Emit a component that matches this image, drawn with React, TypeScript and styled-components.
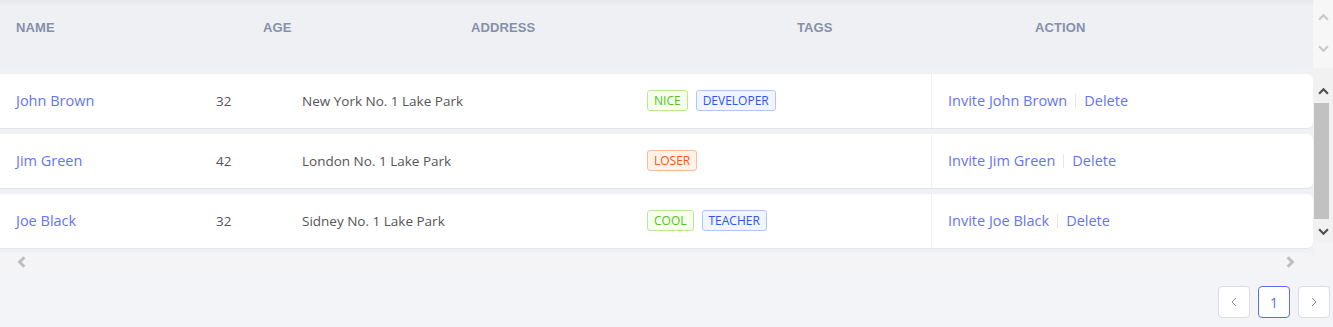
import React from 'react';
import styled, { createGlobalStyle } from 'styled-components';

type TagColor = 'green' | 'geekblue' | 'volcano';

interface Row {
  key: string;
  name: string;
  age: number;
  address: string;
  tags: { label: string; color: TagColor }[];
}

const rows: Row[] = [
  {
    key: '1',
    name: 'John Brown',
    age: 32,
    address: 'New York No. 1 Lake Park',
    tags: [
      { label: 'nice', color: 'green' },
      { label: 'developer', color: 'geekblue' },
    ],
  },
  {
    key: '2',
    name: 'Jim Green',
    age: 42,
    address: 'London No. 1 Lake Park',
    tags: [{ label: 'loser', color: 'volcano' }],
  },
  {
    key: '3',
    name: 'Joe Black',
    age: 32,
    address: 'Sidney No. 1 Lake Park',
    tags: [
      { label: 'cool', color: 'green' },
      { label: 'teacher', color: 'geekblue' },
    ],
  },
];

const tagPalette: Record<TagColor, { fg: string; bg: string; border: string }> = {
  green: { fg: '#52c41a', bg: '#f6ffed', border: '#b7eb8f' },
  geekblue: { fg: '#2f54eb', bg: '#f0f5ff', border: '#adc6ff' },
  volcano: { fg: '#fa541c', bg: '#fff2e8', border: '#ffbb96' },
};

const GlobalStyle = createGlobalStyle`
  html, body {
    margin: 0;
    padding: 0;
    background: #f3f4f7;
    font-family: "Open Sans", "Liberation Sans", sans-serif;
  }
  * { box-sizing: border-box; }
`;

const Page = styled.div`
  width: 1333px;
  height: 327px;
  display: flex;
  flex-direction: column;
  background: #f3f4f7;
  overflow: hidden;
`;

const HeaderWrap = styled.div`
  display: flex;
  height: 68px;
`;

const HeaderRow = styled.div`
  flex: 1;
  display: grid;
  grid-template-columns: 247px 208px 326px 238px 1fr;
  align-items: start;
  padding-top: 20px;
  background: linear-gradient(#e6e7eb 0px, #eff0f4 6px, #eff0f4 100%);
`;

const HeadCell = styled.div`
  padding-left: 16px;
  font-family: "Liberation Sans", Arial, sans-serif;
  font-size: 13px;
  font-weight: 600;
  color: #8590aa;
  text-transform: uppercase;
  letter-spacing: 0.1px;
`;

const BodyWrap = styled.div`
  display: flex;
  height: 202px;
`;

const BodyMain = styled.div`
  flex: 1;
  display: flex;
  flex-direction: column;
  background: #f0f1f5;
`;

const RowList = styled.div`
  flex: 1;
  display: flex;
  flex-direction: column;
  gap: 6px;
  padding-top: 6px;
`;

const RowCard = styled.div`
  height: 54px;
  display: grid;
  grid-template-columns: 200px 86px 345px 300px 1fr;
  align-items: stretch;
  background: #fff;
  border-radius: 0 6px 6px 0;
  box-shadow: 0 1px 0 #e3e4e8;
`;

const Cell = styled.div<{ $fixed?: boolean }>`
  display: flex;
  align-items: center;
  gap: 8px;
  padding-left: 16px;
  padding-bottom: 1px;
  font-size: 13.5px;
  color: #555;
  border-left: ${({ $fixed }) => ($fixed ? '1px solid #f2f2f4' : 'none')};
`;

const Link = styled.a`
  color: #6674f2;
  font-size: 14.5px;
  cursor: pointer;
  text-decoration: none;
`;

const Divider = styled.span`
  display: inline-block;
  width: 1px;
  height: 14px;
  background: #e8e8ec;
`;

const Tag = styled.span<{ $color: TagColor }>`
  display: inline-flex;
  align-items: center;
  height: 21px;
  padding: 0 6px;
  font-size: 12px;
  text-transform: uppercase;
  border-radius: 3px;
  color: ${({ $color }) => tagPalette[$color].fg};
  background: ${({ $color }) => tagPalette[$color].bg};
  border: 1px solid ${({ $color }) => tagPalette[$color].border};
`;

const HScroll = styled.div`
  height: 17px;
  display: flex;
  align-items: center;
  justify-content: space-between;
  padding: 0 17px 0 16px;
  background: #f4f4f6;
`;

const VScroll = styled.div<{ $light?: boolean }>`
  width: 20px;
  display: flex;
  flex-direction: column;
  align-items: center;
  background: ${({ $light }) => ($light ? '#f7f7f8' : '#f1f1f1')};
`;

const ArrowBox = styled.div<{ $h: number; $pad?: number }>`
  height: ${({ $h }) => $h}px;
  width: 100%;
  display: flex;
  align-items: ${({ $pad }) => ($pad ? 'flex-end' : 'center')};
  justify-content: center;
  padding-bottom: ${({ $pad }) => $pad ?? 0}px;
`;

const Thumb = styled.div`
  width: 15px;
  margin-right: 4px;
  height: 116px;
  background: #c1c1c1;
`;

const Corner = styled.div`
  flex: 1;
  width: 100%;
  background: #f4f4f6;
`;

const Footer = styled.div`
  flex: 1;
  display: flex;
  justify-content: flex-end;
  align-items: flex-start;
  gap: 8px;
  padding: 16px 3px 0 0;
`;

const PageBtn = styled.button<{ $active?: boolean }>`
  width: 32px;
  height: 32px;
  display: flex;
  align-items: center;
  justify-content: center;
  padding: 0;
  background: #fff;
  border: 1px solid ${({ $active }) => ($active ? '#5d6cf2' : '#dcdde2')};
  border-radius: 4px;
  color: ${({ $active }) => ($active ? '#5d6cf2' : '#8a8a8a')};
  font-family: "Open Sans", sans-serif;
  font-size: 14px;
  cursor: pointer;
`;

const Chevron = ({
  dir,
  color,
  size = 10,
  weight = 2,
}: {
  dir: 'up' | 'down' | 'left' | 'right';
  color: string;
  size?: number;
  weight?: number;
}) => {
  const rot = { up: 0, right: 90, down: 180, left: 270 }[dir];
  return (
    <svg width={size} height={size} viewBox="0 0 10 10" style={{ transform: `rotate(${rot}deg)` }}>
      <path d="M1 7 L5 3 L9 7" fill="none" stroke={color} strokeWidth={weight} />
    </svg>
  );
};

export default function App() {
  return (
    <>
      <GlobalStyle />
      <Page>
        <HeaderWrap>
          <HeaderRow>
            <HeadCell>Name</HeadCell>
            <HeadCell>Age</HeadCell>
            <HeadCell>Address</HeadCell>
            <HeadCell>Tags</HeadCell>
            <HeadCell>Action</HeadCell>
          </HeaderRow>
          <VScroll $light>
            <ArrowBox $h={34}>
              <Chevron dir="up" color="#c9c9c9" size={11} />
            </ArrowBox>
            <ArrowBox $h={28}>
              <Chevron dir="down" color="#c9c9c9" size={11} />
            </ArrowBox>
          </VScroll>
        </HeaderWrap>
        <BodyWrap>
          <BodyMain>
            <RowList>
              {rows.map((row) => (
                <RowCard key={row.key}>
                  <Cell>
                    <Link>{row.name}</Link>
                  </Cell>
                  <Cell>{row.age}</Cell>
                  <Cell>{row.address}</Cell>
                  <Cell>
                    {row.tags.map((tag) => (
                      <Tag key={tag.label} $color={tag.color}>
                        {tag.label}
                      </Tag>
                    ))}
                  </Cell>
                  <Cell $fixed>
                    <Link>Invite {row.name}</Link>
                    <Divider />
                    <Link>Delete</Link>
                  </Cell>
                </RowCard>
              ))}
            </RowList>
            <HScroll>
              <Chevron dir="left" color="#bdbdbd" size={12} weight={2.5} />
              <Chevron dir="right" color="#bdbdbd" size={12} weight={2.5} />
            </HScroll>
          </BodyMain>
          <VScroll>
            <ArrowBox $h={35} $pad={6}>
              <Chevron dir="up" color="#505050" size={11} />
            </ArrowBox>
            <Thumb />
            <ArrowBox $h={24}>
              <Chevron dir="down" color="#505050" size={11} />
            </ArrowBox>
            <Corner />
          </VScroll>
        </BodyWrap>
        <Footer>
          <PageBtn>
            <Chevron dir="left" color="#8c8c8c" size={10} weight={1} />
          </PageBtn>
          <PageBtn $active>1</PageBtn>
          <PageBtn>
            <Chevron dir="right" color="#8c8c8c" size={10} weight={1} />
          </PageBtn>
        </Footer>
      </Page>
    </>
  );
}
